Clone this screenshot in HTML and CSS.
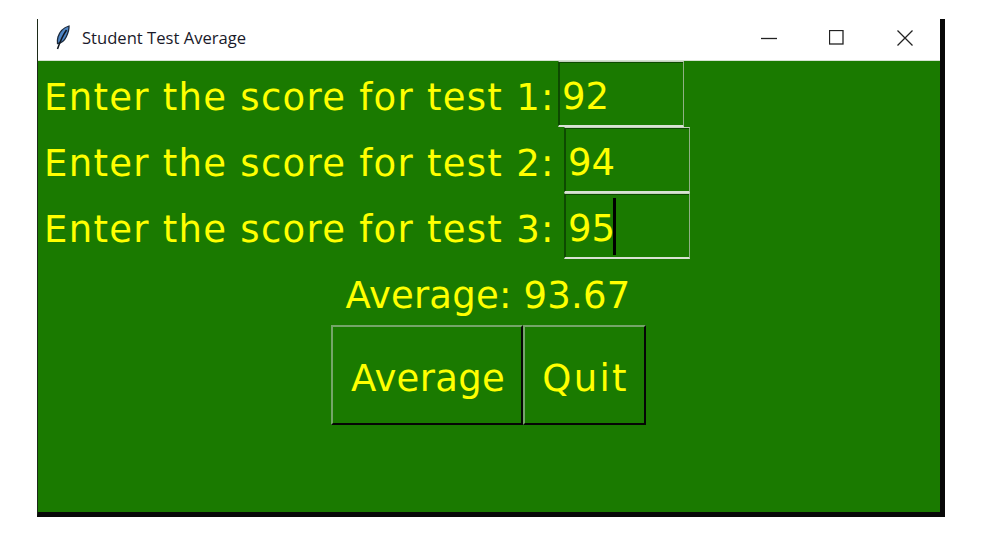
FILE: index.html
```html
<!DOCTYPE html>
<html lang="en">
<head>
    <meta charset="UTF-8">
    <title>Student Test Average</title>
    <link rel="stylesheet" href="styles.css">
</head>
<body>

<div class="window">
    <div class="titlebar">
        <svg class="feather" width="18" height="26" viewBox="0 0 18 26">
            <path d="M15 1C10 2.500 5.500 7 4 12c-.6 2.200-.8 4.500-.5 6.500 4-.5 7-3 8.800-6.800C14 8 15.300 4.800 15 1z" fill="#4f86c6" stroke="#1b2a3c" stroke-width="1.300"/>
            <path d="M12.500 5C9.500 9.500 6.500 15 3.500 24" fill="none" stroke="#10161f" stroke-width="1.500"/>
        </svg>
        <span class="title">Student Test Average</span>
        <div class="controls">
            <svg class="control" width="16" height="16" viewBox="0 0 16 16"><path d="M0 8.500h16" stroke="#222" stroke-width="1.300"/></svg>
            <svg class="control" width="16" height="16" viewBox="0 0 16 16"><rect x=".5" y=".5" width="13.500" height="13.500" fill="none" stroke="#222" stroke-width="1.300"/></svg>
            <svg class="control" width="16" height="16" viewBox="0 0 16 16"><path d="M.5.500l15 15M15.500.500l-15 15" stroke="#222" stroke-width="1.300"/></svg>
        </div>
    </div>

    <div class="content">
        <div class="score-row first">
            <div class="score-label">Enter the score for test 1:</div>
            <div class="entry">92</div>
        </div>
        <div class="score-row">
            <div class="score-label">Enter the score for test 2:</div>
            <div class="entry">94</div>
        </div>
        <div class="score-row">
            <div class="score-label">Enter the score for test 3:</div>
            <div class="entry">95<span class="caret"></span></div>
        </div>

        <div class="result">Average: 93.67</div>

        <div class="buttons">
            <button class="average-btn">Average</button>
            <button class="quit-btn">Quit</button>
        </div>
    </div>
</div>

</body>
</html>
```

FILE: styles.css
```css
body {
    margin: 0;
    background-color: white;
    font-family: "DejaVu Sans", sans-serif;
}

.window {
    box-sizing: border-box;
    width: 908px;
    height: 498px;
    margin: 19px 0 0 37px;
    border-left: 1px solid #1c2a18;
    border-right: 5px solid #080808;
    border-bottom: 5px solid #080808;
    display: flex;
    flex-direction: column;
    background-color: #1a7a00;
}

.titlebar {
    height: 42px;
    flex-shrink: 0;
    display: flex;
    align-items: center;
    background-color: white;
    border-bottom: 1px solid #d5e2d0;
    box-sizing: border-box;
    padding: 0 0 4px 16px;
}

.title {
    margin-left: 10px;
    font-family: "Open Sans", sans-serif;
    font-size: 16.600px;
    color: #1a1a2a;
}

.controls {
    margin-left: auto;
    display: flex;
    gap: 52px;
    padding-right: 27px;
}

.content {
    flex: 1;
    display: flex;
    flex-direction: column;
    color: #ffff00;
    font-size: 37px;
}

.score-row {
    display: flex;
    height: 66px;
    padding-left: 6px;
}

.score-label {
    box-sizing: border-box;
    width: 520px;
    line-height: 73px;
    letter-spacing: 1.280px;
    white-space: nowrap;
}

.first .score-label {
    width: 514px;
}

.entry {
    box-sizing: border-box;
    width: 126px;
    padding-left: 3px;
    line-height: 70px;
    display: flex;
    border-style: solid;
    border-width: 1px 1px 2px 1px;
    border-color: #c4d2bc #8fb184 #d9e2d4 #0d4a00;
    box-shadow: inset 1px 1px 0 #0d4a00;
}

.caret {
    width: 3px;
    height: 57px;
    margin: 4px 0 0 -2px;
    background-color: black;
}

.result {
    height: 66px;
    line-height: 74px;
    text-align: center;
    padding-right: 2px;
    letter-spacing: 0.200px;
}

.buttons {
    display: flex;
    justify-content: center;
    padding-right: 2px;
}

button {
    box-sizing: border-box;
    height: 100px;
    padding: 6px 0 0 3px;
    font-family: inherit;
    font-size: 37px;
    color: #ffff00;
    background-color: #1a7a00;
    border: 2px solid;
    border-color: #75a569 #050505 #050505 #75a569;
}

.average-btn {
    width: 192px;
    letter-spacing: 0.300px;
}

.quit-btn {
    width: 123px;
    letter-spacing: 2.300px;
}
```
